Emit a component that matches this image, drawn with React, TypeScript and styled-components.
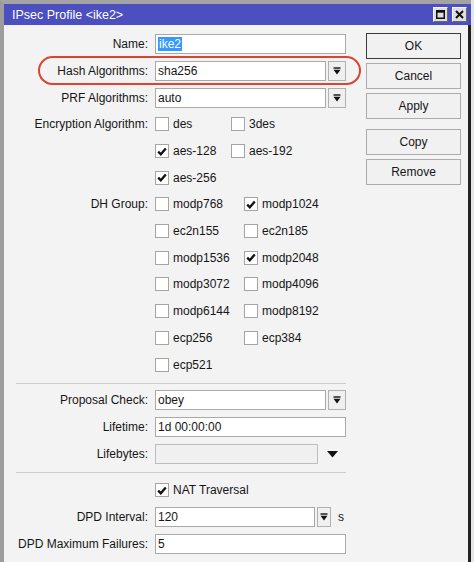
import React from "react";
import styled, { createGlobalStyle } from "styled-components";

const Global = createGlobalStyle`
  html, body {
    margin: 0;
    padding: 0;
    background: #e9e9e9;
  }
  body {
    font-family: "Liberation Sans", Arial, sans-serif;
    font-size: 12px;
    color: #161616;
  }
`;

const Screen = styled.div`
  width: 474px;
  height: 562px;
  overflow: hidden;
  padding-right: 3px;
  box-sizing: border-box;
  background: #e6e6e6;
`;

const Window = styled.div`
  height: 100%;
  display: flex;
  flex-direction: column;
  border-left: 4px solid #9d9d9d;
  border-top: 4px solid #a3a3a3;
  box-sizing: border-box;
`;

const TitleBar = styled.div`
  height: 21px;
  flex: none;
  display: flex;
  align-items: center;
  justify-content: space-between;
  background: #4b4fbf;
  padding: 0 4px 0 8px;
`;

const Title = styled.span`
  color: #ffffff;
  font-size: 12.5px;
`;

const TitleButtons = styled.div`
  display: flex;
  gap: 4px;
`;

const TitleButton = styled.div`
  width: 15px;
  height: 15px;
  background: #dedede;
  border: 1px solid #f4f4f4;
  border-right-color: #6a6a6a;
  border-bottom-color: #6a6a6a;
  display: flex;
  align-items: center;
  justify-content: center;
  box-sizing: border-box;
`;

const Body = styled.div`
  flex: 1;
  display: flex;
  background: #f3f3f3;
  border-right: 3px solid #222;
  padding-top: 5px;
`;

const Form = styled.div`
  width: 342px;
  display: flex;
  flex-direction: column;
`;

const Row = styled.div<{ $h?: number }>`
  display: grid;
  grid-template-columns: 144px 1fr;
  column-gap: 7px;
  align-items: center;
  height: ${(p) => p.$h ?? 27}px;
  position: relative;
`;

const Label = styled.div`
  text-align: right;
  white-space: nowrap;
`;

const Field = styled.div`
  display: flex;
  align-items: center;
  min-width: 0;
`;

const TextBox = styled.div<{ $w?: number; $disabled?: boolean }>`
  height: 20px;
  box-sizing: border-box;
  ${(p) => (p.$w ? `width: ${p.$w}px; flex: none;` : "flex: 1;")}
  background: ${(p) => (p.$disabled ? "#f0f0f0" : "#ffffff")};
  border: 1px solid ${(p) => (p.$disabled ? "#bdbdbd" : "#a9a9a9")};
  padding: 0 2px;
  display: flex;
  align-items: center;
  white-space: nowrap;
`;

const Selected = styled.span`
  background: #3399ff;
  color: #fff;
  padding: 0 1px;
`;

const DropButton = styled.div<{ $w?: number }>`
  width: ${(p) => p.$w ?? 18}px;
  height: 20px;
  flex: none;
  margin-left: 2px;
  box-sizing: border-box;
  border: 1px solid #b0b0b0;
  background: #f0f0f0;
  display: flex;
  align-items: center;
  justify-content: center;
`;

const Unit = styled.span`
  margin-left: 7px;
`;

const ArrowSlot = styled.div`
  width: 28px;
  display: flex;
  justify-content: center;
`;

const Highlight = styled.div`
  position: absolute;
  left: 34px;
  right: -15px;
  top: -1px;
  bottom: -1px;
  border: 2.5px solid #dc4330;
  border-radius: 15px;
  pointer-events: none;
`;

const Checks = styled.div<{ $col: number }>`
  display: grid;
  grid-template-columns: ${(p) => p.$col}px auto;
  align-items: center;
`;

const CheckItem = styled.div`
  display: flex;
  align-items: center;
`;

const Box = styled.div`
  width: 14px;
  height: 14px;
  box-sizing: border-box;
  border: 1px solid #a4a4a4;
  background: #fff;
  display: flex;
  align-items: center;
  justify-content: center;
  margin-right: 4px;
  flex: none;
`;

const Separator = styled.div<{ $top: number; $bottom: number }>`
  height: 0;
  border-top: 1px solid #cdcdcd;
  margin: ${(p) => p.$top}px 0 ${(p) => p.$bottom}px 12px;
`;

const Buttons = styled.div`
  width: 95px;
  margin-left: 20px;
  padding-top: 3px;
  display: flex;
  flex-direction: column;
  gap: 4px;
`;

const Button = styled.div<{ $default?: boolean; $gap?: number }>`
  height: 26px;
  box-sizing: border-box;
  border: 1px solid ${(p) => (p.$default ? "#3c3c3c" : "#acacac")};
  background: #f1f1f1;
  display: flex;
  align-items: center;
  justify-content: center;
  margin-top: ${(p) => p.$gap ?? 0}px;
`;

const Tick = () => (
  <svg width="10" height="9" viewBox="0 0 10 9">
    <path d="M1.2 4.6 L3.8 7.3 L8.8 1.4" fill="none" stroke="#111" strokeWidth="2.3" />
  </svg>
);

const DropIcon = () => (
  <svg width="8" height="8" viewBox="0 0 8 8">
    <rect x="0.5" y="0.3" width="7" height="1.4" fill="#111" />
    <polygon points="0.5,2.8 7.5,2.8 4,7.6" fill="#111" />
  </svg>
);

function Check({ on, label }: { on?: boolean; label: string }) {
  return (
    <CheckItem>
      <Box>{on && <Tick />}</Box>
      {label}
    </CheckItem>
  );
}

type Pair = [string, boolean, string?, boolean?];

const encryption: Pair[] = [
  ["des", false, "3des", false],
  ["aes-128", true, "aes-192", false],
  ["aes-256", true],
];

const dh: Pair[] = [
  ["modp768", false, "modp1024", true],
  ["ec2n155", false, "ec2n185", false],
  ["modp1536", false, "modp2048", true],
  ["modp3072", false, "modp4096", false],
  ["modp6144", false, "modp8192", false],
  ["ecp256", false, "ecp384", false],
  ["ecp521", false],
];

function CheckGroup({ label, items, col }: { label: string; items: Pair[]; col: number }) {
  return (
    <>
      {items.map(([a, aOn, b, bOn], i) => (
        <Row $h={26.7} key={a}>
          <Label>{i === 0 ? label : ""}</Label>
          <Checks $col={col}>
            <Check label={a} on={aOn} />
            {b && <Check label={b} on={bOn} />}
          </Checks>
        </Row>
      ))}
    </>
  );
}

export default function App() {
  return (
    <Screen>
      <Global />
      <Window>
        <TitleBar>
          <Title>IPsec Profile &lt;ike2&gt;</Title>
          <TitleButtons>
            <TitleButton>
              <svg width="9" height="9" viewBox="0 0 9 9">
                <rect x="0.75" y="0.75" width="7.5" height="7.5" fill="none" stroke="#111" strokeWidth="1.5" />
                <rect x="0.5" y="0.5" width="8" height="2.2" fill="#111" />
              </svg>
            </TitleButton>
            <TitleButton>
              <svg width="9" height="9" viewBox="0 0 9 9">
                <path d="M1 1 L8 8 M8 1 L1 8" stroke="#111" strokeWidth="2" />
              </svg>
            </TitleButton>
          </TitleButtons>
        </TitleBar>
        <Body>
          <Form>
            <Row>
              <Label>Name:</Label>
              <Field>
                <TextBox>
                  <Selected>ike2</Selected>
                </TextBox>
              </Field>
            </Row>
            <Row>
              <Highlight />
              <Label>Hash Algorithms:</Label>
              <Field>
                <TextBox>sha256</TextBox>
                <DropButton>
                  <DropIcon />
                </DropButton>
              </Field>
            </Row>
            <Row>
              <Label>PRF Algorithms:</Label>
              <Field>
                <TextBox>auto</TextBox>
                <DropButton>
                  <DropIcon />
                </DropButton>
              </Field>
            </Row>
            <CheckGroup label="Encryption Algorithm:" items={encryption} col={76} />
            <CheckGroup label="DH Group:" items={dh} col={89} />
            <Separator $top={5} $bottom={3} />
            <Row>
              <Label>Proposal Check:</Label>
              <Field>
                <TextBox>obey</TextBox>
                <DropButton>
                  <DropIcon />
                </DropButton>
              </Field>
            </Row>
            <Row>
              <Label>Lifetime:</Label>
              <Field>
                <TextBox>1d 00:00:00</TextBox>
              </Field>
            </Row>
            <Row>
              <Label>Lifebytes:</Label>
              <Field>
                <TextBox $disabled />
                <ArrowSlot>
                  <svg width="11" height="7" viewBox="0 0 11 7">
                    <polygon points="0,0 11,0 5.5,6.5" fill="#111" />
                  </svg>
                </ArrowSlot>
              </Field>
            </Row>
            <Separator $top={4} $bottom={4} />
            <Row $h={26.5}>
              <Label />
              <Field>
                <Check label="NAT Traversal" on />
              </Field>
            </Row>
            <Row>
              <Label>DPD Interval:</Label>
              <Field>
                <TextBox $w={160}>120</TextBox>
                <DropButton $w={14}>
                  <DropIcon />
                </DropButton>
                <Unit>s</Unit>
              </Field>
            </Row>
            <Row>
              <Label>DPD Maximum Failures:</Label>
              <Field>
                <TextBox>5</TextBox>
              </Field>
            </Row>
          </Form>
          <Buttons>
            <Button $default>OK</Button>
            <Button>Cancel</Button>
            <Button>Apply</Button>
            <Button $gap={6}>Copy</Button>
            <Button>Remove</Button>
          </Buttons>
        </Body>
      </Window>
    </Screen>
  );
}
